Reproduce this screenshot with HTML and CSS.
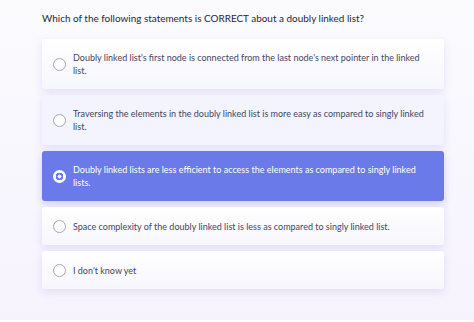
FILE: index.html
```html
<!DOCTYPE html>
<html>
<head>
<meta charset="utf-8">
<link rel="stylesheet" href="styles.css">
</head>
<body>
<div class="page">
  <h1 class="question">Which of the following statements is CORRECT about a doubly linked list?</h1>
  <div class="options">
    <div class="option"><span class="radio"></span><span class="label">Doubly linked list's first node is connected from the last node's next pointer in the linked list.</span></div>
    <div class="option tinted"><span class="radio"></span><span class="label">Traversing the elements in the doubly linked list is more easy as compared to singly linked list.</span></div>
    <div class="option selected"><span class="radio"></span><span class="label">Doubly linked lists are less efficient to access the elements as compared to singly linked lists.</span></div>
    <div class="option"><span class="radio"></span><span class="label">Space complexity of the doubly linked list is less as compared to singly linked list.</span></div>
    <div class="option"><span class="radio"></span><span class="label">I don't know yet</span></div>
  </div>
</div>
</body>
</html>
```
FILE: styles.css
```css
html, body {
  margin: 0;
  padding: 0;
}
body {
  width: 474px;
  height: 322px;
  background: #ffffff;
  font-family: Lato, "Open Sans", sans-serif;
  overflow: hidden;
}
.page {
  height: 320px;
  background: linear-gradient(180deg, #fbfbfe 0%, #f6f3fd 100%);
  padding: 11px 30px 0 42px;
  box-sizing: border-box;
}
.question {
  margin: 0 0 14px 0;
  font-size: 9.95px;
  line-height: 14px;
  font-weight: 400;
  color: #26283a;
}
.options {
  display: flex;
  flex-direction: column;
  gap: 6px;
}
.option {
  display: flex;
  align-items: center;
  gap: 7px;
  padding: 12px 18px 12px 11px;
  border-radius: 3px;
  background: linear-gradient(180deg, #ffffff 0%, #f6f6fd 100%);
  box-shadow: 0 3px 8px rgba(150, 135, 230, 0.22);
  color: #44465e;
  font-size: 9px;
  line-height: 13px;
}
.option.tinted {
  background: #f3f4fd;
}
.option.selected {
  background: #6a7ae9;
  color: #ffffff;
  box-shadow: 0 3px 8px rgba(110, 110, 230, 0.3);
}
.radio {
  flex: none;
  width: 13px;
  height: 13px;
  border-radius: 50%;
  border: 1px solid #a4a4ae;
  background: #ffffff;
  box-sizing: border-box;
}
.selected .radio {
  border: none;
  background: radial-gradient(circle, #eef0ff 0 1.8px, #6a7ae9 2.2px 3.6px, #ffffff 4px);
}
.label {
  flex: 1;
  min-height: 14px;
  display: flex;
  align-items: center;
}
```
